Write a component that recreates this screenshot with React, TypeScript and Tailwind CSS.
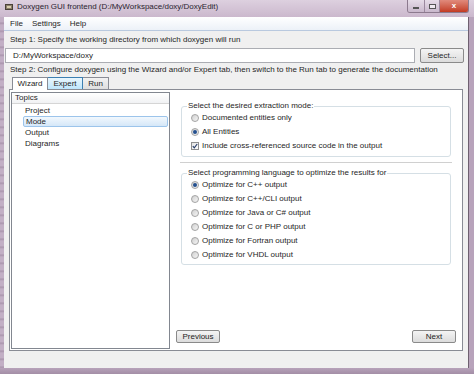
import React from "react";

const font = "font-['Liberation_Sans',Arial,sans-serif]";

function Radio({ checked }: { checked?: boolean }) {
  return (
    <span className="w-[8px] h-[8px] rounded-full border border-[#a3a3a3] bg-gradient-to-br from-[#d0d0d0] to-[#f6f6f6] flex items-center justify-center shrink-0">
      {checked && <span className="w-[4px] h-[4px] rounded-full bg-[#24508f]" />}
    </span>
  );
}

function Check() {
  return (
    <span className="w-[8px] h-[8px] border border-[#8f8f8f] bg-gradient-to-br from-[#e4e4e4] to-white flex items-center justify-center shrink-0">
      <svg width="6" height="6" viewBox="0 0 6 6">
        <path d="M0.8 3.2 L2.3 4.8 L5.2 1" stroke="#2a3f6a" strokeWidth="1.2" fill="none" />
      </svg>
    </span>
  );
}

function Btn({ children }: { children: React.ReactNode }) {
  return (
    <div className="w-[44px] h-[13px] border border-[#8a8a8a] rounded-[2px] bg-gradient-to-b from-[#f4f4f4] to-[#dcdcdc] flex items-center justify-center text-[#222]">
      {children}
    </div>
  );
}

function Option({ label, checked }: { label: string; checked?: boolean }) {
  return (
    <div className="flex items-center gap-[3px] h-[14px] pl-[9px]">
      <Radio checked={checked} />
      <span>{label}</span>
    </div>
  );
}

export default function App() {
  return (
    <div className={`w-[474px] h-[374px] flex flex-col bg-[#bda9c0] text-[8px] leading-[10px] text-[#262626] ${font}`}>
      {/* title bar */}
      <div className="h-[17px] flex items-start bg-gradient-to-b from-[#ddd0df] to-[#cbb8cd]">
        <div className="flex items-center h-[14px] pl-[5px] gap-[4px]">
          <svg width="8" height="8" viewBox="0 0 8 8">
            <rect x="0.5" y="1.5" width="7" height="5" fill="#8c7f6c" stroke="#4a4237" />
            <rect x="2" y="3" width="4" height="2" fill="#d9cfae" />
          </svg>
          <span className="text-[#2a2530]">Doxygen GUI frontend (D:/MyWorkspace/doxy/DoxyEdit)</span>
        </div>
        <div className="flex-1" />
        <div className="flex h-[13px] mr-[5px] border border-t-0 border-[#8c7a8e] rounded-b-[3px] overflow-hidden">
          <div className="w-[17px] bg-gradient-to-b from-[#e6dce8] to-[#c9b8cc] border-r border-[#9b889e] flex items-center justify-center">
            <span className="w-[6px] h-[2px] bg-white border border-[#555] mt-[3px]" />
          </div>
          <div className="w-[15px] bg-gradient-to-b from-[#e6dce8] to-[#c9b8cc] border-r border-[#9b889e] flex items-center justify-center">
            <span className="w-[7px] h-[5px] border border-[#555] bg-white/60" />
          </div>
          <div className="w-[28px] bg-gradient-to-b from-[#e08a7c] to-[#c23a22] flex items-center justify-center text-white text-[8px] font-bold">
            x
          </div>
        </div>
      </div>
      <div className="flex flex-1">
        <div className="w-[4px] bg-[repeating-linear-gradient(180deg,#c2afc5_0px,#c2afc5_5px,#a893ab_6px,#c2afc5_8px)]" />
        {/* client */}
        <div className="flex-1 flex flex-col bg-[#f0f0f0] border-r border-[#6e6070]">
          <div className="h-[14px] flex items-center gap-[9px] pl-[6px] bg-gradient-to-b from-white to-[#ecf1f8] border-b border-[#b9c9df]">
            <span>File</span>
            <span>Settings</span>
            <span>Help</span>
          </div>
          <div className="mt-[4px] pl-[6px]">Step 1: Specify the working directory from which doxygen will run</div>
          <div className="mt-[3px] flex items-center pl-[1px] pr-[4px] gap-[5px]">
            <div className="flex-1 h-[15px] bg-white border border-[#abadb3] flex items-center pl-[7px]">D:/MyWorkspace/doxy</div>
            <div className="w-[44px] h-[15px] border border-[#8a8a8a] rounded-[2px] bg-gradient-to-b from-[#f4f4f4] to-[#dcdcdc] flex items-center justify-center">Select...</div>
          </div>
          <div className="mt-[2px] pl-[6px]">Step 2: Configure doxygen using the Wizard and/or Expert tab, then switch to the Run tab to generate the documentation</div>
          {/* tabs */}
          <div className="mt-[2px] ml-[8px] flex items-end h-[12px]">
            <div className="w-[36px] h-[13px] bg-white border border-b-0 border-[#898c95] flex items-center justify-center relative top-[1px]">Wizard</div>
            <div className="w-[35px] h-[12px] bg-gradient-to-b from-[#eaf6fd] to-[#bee6fd] border border-b-0 border-l-0 border-[#3c7fb1] flex items-center justify-center">Expert</div>
            <div className="w-[26px] h-[12px] bg-gradient-to-b from-[#f2f2f2] to-[#dedede] border border-b-0 border-l-0 border-[#898c95] flex items-center justify-center">Run</div>
          </div>
          <div className="ml-[5px] mr-[5px] mb-[17px] flex-1 flex bg-white border border-[#898c95] pt-[2px] pb-[1px] pl-[1px]">
            {/* tree */}
            <div className="w-[159px] border border-[#828790] flex flex-col">
              <div className="h-[11px] bg-gradient-to-b from-white to-[#f1f2f4] border-b border-[#d5d5d5] flex items-center pl-[3px]">Topics</div>
              <div className="flex flex-col pt-[1px]">
                <div className="h-[11px] pl-[13px] flex items-center">Project</div>
                <div className="h-[11px] ml-[11px] mr-[1px] pl-[2px] flex items-center bg-gradient-to-b from-[#f2f8fd] to-[#d5e7f8] border border-[#9cc4eb] rounded-[2px]">Mode</div>
                <div className="h-[11px] pl-[13px] flex items-center">Output</div>
                <div className="h-[11px] pl-[13px] flex items-center">Diagrams</div>
              </div>
            </div>
            {/* right area */}
            <div className="flex-1 flex flex-col px-[10px] pt-[9px] pb-[5px]">
              <fieldset className="border border-[#d5dfe5] rounded-[3px] pb-[3px] ml-[1px] mr-[1px]">
                <legend className="ml-[5px] px-[1px]">Select the desired extraction mode:</legend>
                <Option label="Documented entities only" />
                <Option label="All Entities" checked />
                <div className="flex items-center gap-[3px] h-[14px] pl-[9px]">
                  <Check />
                  <span>Include cross-referenced source code in the output</span>
                </div>
              </fieldset>
              <div className="mt-[5px] border-t border-[#d0d0d0]" />
              <fieldset className="mt-[5px] border border-[#d5dfe5] rounded-[3px] pb-[2px] ml-[1px] mr-[1px]">
                <legend className="ml-[5px] px-[1px]">Select programming language to optimize the results for</legend>
                <Option label="Optimize for C++ output" checked />
                <Option label="Optimize for C++/CLI output" />
                <Option label="Optimize for Java or C# output" />
                <Option label="Optimize for C or PHP output" />
                <Option label="Optimize for Fortran output" />
                <Option label="Optimize for VHDL output" />
              </fieldset>
              <div className="flex-1" />
              <div className="flex justify-between mr-[-4px] ml-[-4px] mb-[1px]">
                <Btn>Previous</Btn>
                <Btn>Next</Btn>
              </div>
            </div>
          </div>
        </div>
        <div className="w-[5px] bg-[#b8a3bb]" />
      </div>
      <div className="h-[6px] bg-gradient-to-b from-[#b7a2ba] to-[#a38ea6]" />
    </div>
  );
}
